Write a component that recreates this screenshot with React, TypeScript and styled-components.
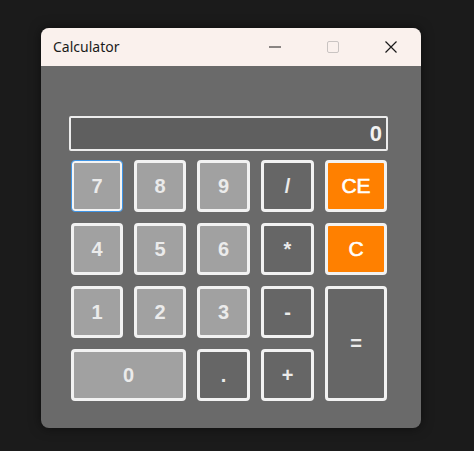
import styled, { createGlobalStyle } from "styled-components";

const GlobalStyle = createGlobalStyle`
    html, body {
        margin: 0;
        padding: 0;
        background: #1b1b1b;
    }
    body {
        width: 474px;
        height: 451px;
        overflow: hidden;
    }
`;

const Desktop = styled.div`
    padding: 28px 0 0 41px;
`;

const Window = styled.div`
    width: 380px;
    height: 400px;
    border-radius: 8px;
    overflow: hidden;
    background: #6a6a6a;
    display: flex;
    flex-direction: column;
    box-shadow: 0 0 12px rgba(0, 0, 0, 0.5);
`;

const TitleBar = styled.div`
    height: 38px;
    flex-shrink: 0;
    background: #faf1ed;
    display: flex;
    align-items: center;
    padding-left: 12px;
    padding-right: 1px;
    font-family: "Noto Sans", "Open Sans", sans-serif;
    font-size: 14px;
    color: #1a1a1a;
`;

const Title = styled.span`
    flex: 1;
    margin-top: -1px;
`;

const Controls = styled.div`
    display: flex;
    height: 100%;
`;

const ControlBox = styled.div`
    width: 58px;
    display: flex;
    align-items: center;
    justify-content: center;
`;

const Body = styled.div`
    padding: 50px 0 0 28px;
    display: flex;
    flex-direction: column;
`;

const Display = styled.div`
    width: 319px;
    height: 35px;
    box-sizing: border-box;
    border: 2px solid #ececec;
    border-radius: 2px;
    background: #5f5f5f;
    color: #f2f2f2;
    font-family: "Liberation Sans", Arial, sans-serif;
    font-weight: bold;
    font-size: 22px;
    display: flex;
    align-items: center;
    justify-content: flex-end;
    padding-right: 4px;
`;

const Keypad = styled.div`
    margin: 9px 0 0 2px;
    display: grid;
    grid-template-columns: 52px 52px 53px 53px 62px;
    grid-auto-rows: 52px;
    column-gap: 11px;
    row-gap: 11px;
`;

type Kind = "digit" | "op" | "clear";

const fills: Record<Kind, string> = {
    digit: "#a1a1a1",
    op: "#666666",
    clear: "#ff8000",
};

const Key = styled.button<{ $kind: Kind; $focused?: boolean; $wide?: boolean; $tall?: boolean }>`
    box-sizing: border-box;
    margin: 0;
    padding: 0;
    border: ${(p) => (p.$focused ? "1px solid #3f95e6" : "3px solid #f2f2f2")};
    box-shadow: ${(p) => (p.$focused ? "inset 0 0 0 2px #f4f4f4" : "none")};
    border-radius: 4px;
    background: ${(p) => fills[p.$kind]};
    color: #ebebeb;
    font-family: "Liberation Sans", Arial, sans-serif;
    font-weight: bold;
    font-size: 20px;
    display: flex;
    align-items: center;
    justify-content: center;
    grid-column: ${(p) => (p.$wide ? "span 2" : "auto")};
    grid-row: ${(p) => (p.$tall ? "span 2" : "auto")};
    ${(p) => (p.$kind === "clear" ? "font-size: 21px; font-weight: normal; -webkit-text-stroke: 0.6px #fff; color: #fff;" : "")}
`;

function MinimizeIcon() {
    return (
        <svg width="14" height="14" viewBox="0 0 14 14">
            <line x1="1" y1="7" x2="13" y2="7" stroke="#1a1a1a" strokeWidth="1.2"/>
        </svg>
    );
}

function MaximizeIcon() {
    return (
        <svg width="14" height="14" viewBox="0 0 14 14">
            <rect x="1.5" y="1.5" width="11" height="11" rx="1.5" fill="none" stroke="#c9c4c2" strokeWidth="1"/>
        </svg>
    );
}

function CloseIcon() {
    return (
        <svg width="14" height="14" viewBox="0 0 14 14">
            <path d="M1.5 1.5 L12.5 12.5 M12.5 1.5 L1.5 12.5" stroke="#1a1a1a" strokeWidth="1.2"/>
        </svg>
    );
}

export default function App() {
    return (
        <>
            <GlobalStyle/>
            <Desktop>
                <Window>
                    <TitleBar>
                        <Title>Calculator</Title>
                        <Controls>
                            <ControlBox><MinimizeIcon/></ControlBox>
                            <ControlBox><MaximizeIcon/></ControlBox>
                            <ControlBox><CloseIcon/></ControlBox>
                        </Controls>
                    </TitleBar>
                    <Body>
                        <Display>0</Display>
                        <Keypad>
                            <Key $kind="digit" $focused>7</Key>
                            <Key $kind="digit">8</Key>
                            <Key $kind="digit">9</Key>
                            <Key $kind="op">/</Key>
                            <Key $kind="clear">CE</Key>

                            <Key $kind="digit">4</Key>
                            <Key $kind="digit">5</Key>
                            <Key $kind="digit">6</Key>
                            <Key $kind="op">*</Key>
                            <Key $kind="clear">C</Key>

                            <Key $kind="digit">1</Key>
                            <Key $kind="digit">2</Key>
                            <Key $kind="digit">3</Key>
                            <Key $kind="op">-</Key>
                            <Key $kind="op" $tall>=</Key>

                            <Key $kind="digit" $wide>0</Key>
                            <Key $kind="op">.</Key>
                            <Key $kind="op">+</Key>
                        </Keypad>
                    </Body>
                </Window>
            </Desktop>
        </>
    );
}
